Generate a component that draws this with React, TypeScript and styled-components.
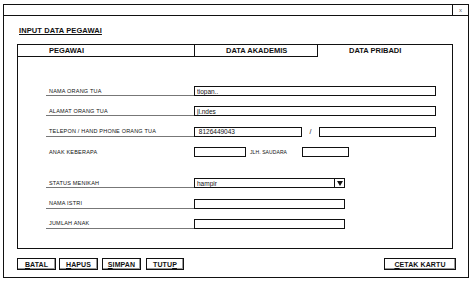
import styled, { createGlobalStyle } from "styled-components";

const GlobalStyle = createGlobalStyle`
  * {
    box-sizing: border-box;
  }
  body {
    margin: 0;
    background: #fff;
    font-family: "Liberation Sans", Arial, sans-serif;
    color: #111;
  }
`;

const Window = styled.div`
  margin: 4px 0 0 3px;
  width: 466px;
  height: 274px;
  border: 1px solid #111;
  display: flex;
  flex-direction: column;
`;

const TitleBar = styled.div`
  height: 11px;
  border-bottom: 1px solid #111;
  display: flex;
  justify-content: flex-end;
`;

const CloseBox = styled.div`
  width: 16px;
  border-left: 1px solid #111;
  font-size: 6px;
  color: #666;
  display: flex;
  align-items: center;
  justify-content: center;
`;

const Body = styled.div`
  padding-left: 13px;
  display: flex;
  flex-direction: column;
`;

const Heading = styled.div`
  margin-top: 10px;
  margin-left: 2px;
  height: 10px;
  font-size: 7.5px;
  font-weight: 700;
  letter-spacing: 0.1px;
  text-decoration: underline;
  text-underline-offset: 1px;
`;

const Panel = styled.div`
  margin-top: 8px;
  width: 436px;
  height: 205px;
  border: 1px solid #111;
  display: flex;
  flex-direction: column;
`;

const TabRow = styled.div`
  display: flex;
  height: 12px;
`;

const Tab = styled.div<{ $w?: number; $active?: boolean }>`
  ${(p) => (p.$w ? `width: ${p.$w}px;` : "flex: 1;")}
  border-bottom: 1px solid ${(p) => (p.$active ? "transparent" : "#111")};
  border-right: ${(p) => (p.$active ? "none" : "1px solid #111")};
  padding-left: 31px;
  font-size: 7.5px;
  font-weight: 700;
  display: flex;
  align-items: center;
`;

const Form = styled.div`
  padding: 29px 0 0 28px;
  display: flex;
  flex-direction: column;
`;

const Group = styled.div<{ $gap?: number }>`
  display: flex;
  flex-direction: column;
  gap: 10.4px;
  margin-top: ${(p) => p.$gap ?? 0}px;
`;

const Row = styled.div`
  display: flex;
  align-items: center;
  height: 10px;
`;

const Label = styled.div<{ $line?: boolean }>`
  width: 148px;
  height: 10px;
  padding-left: 3px;
  border-bottom: 1px solid ${(p) => (p.$line ? "#777" : "transparent")};
  font-size: 5.5px;
  letter-spacing: 0.2px;
  display: flex;
  align-items: center;
  white-space: nowrap;
`;

const Field = styled.input<{ $w: number }>`
  width: ${(p) => p.$w}px;
  height: 10px;
  border: 1px solid #111;
  padding: 0 2px;
  margin: 0;
  font-family: "Liberation Sans", Arial, sans-serif;
  font-size: 6.5px;
  color: #111;
  background: #fff;
  outline: none;
`;

const Slash = styled.div`
  width: 17px;
  text-align: center;
  font-size: 7px;
`;

const SmallLabel = styled.div`
  width: 56px;
  padding-left: 4px;
  font-size: 5px;
  letter-spacing: 0.1px;
  white-space: nowrap;
`;

const Select = styled.div`
  width: 151px;
  height: 10px;
  border: 1px solid #111;
  display: flex;
  align-items: center;
  font-size: 6.5px;
`;

const SelectText = styled.div`
  flex: 1;
  padding-left: 2px;
`;

const Arrow = styled.div`
  width: 10px;
  height: 100%;
  border-left: 1px solid #111;
  display: flex;
  align-items: center;
  justify-content: center;
`;

const ButtonRow = styled.div`
  margin-top: 9px;
  width: 439px;
  display: flex;
  align-items: center;
`;

const Button = styled.div<{ $w: number; $ml?: number }>`
  width: ${(p) => p.$w}px;
  height: 12px;
  margin-left: ${(p) => p.$ml ?? 0}px;
  border: 1px solid #111;
  box-shadow: inset -1px -1px 0 #999, inset 1px 1px 0 #fff;
  font-size: 7px;
  font-weight: 700;
  letter-spacing: 0.1px;
  display: flex;
  align-items: center;
  justify-content: center;
  u {
    text-underline-offset: 1px;
  }
`;

function Combo({ value }: { value: string }) {
  return (
    <Select>
      <SelectText>{value}</SelectText>
      <Arrow>
        <svg width="6" height="5" viewBox="0 0 6 5">
          <path d="M0 0H6L3 5Z" fill="#111" />
        </svg>
      </Arrow>
    </Select>
  );
}

export default function App() {
  return (
    <>
      <GlobalStyle />
      <Window>
        <TitleBar>
          <CloseBox>x</CloseBox>
        </TitleBar>
        <Body>
          <Heading>INPUT DATA PEGAWAI</Heading>
          <Panel>
            <TabRow>
              <Tab $w={177}>PEGAWAI</Tab>
              <Tab $w={123}>DATA AKADEMIS</Tab>
              <Tab $active>DATA PRIBADI</Tab>
            </TabRow>
            <Form>
              <Group>
                <Row>
                  <Label $line>NAMA ORANG TUA</Label>
                  <Field $w={242} readOnly defaultValue="tiopan.." />
                </Row>
                <Row>
                  <Label $line>ALAMAT ORANG TUA</Label>
                  <Field $w={242} readOnly defaultValue="jl.ndes" />
                </Row>
                <Row>
                  <Label $line>TELEPON / HAND PHONE ORANG TUA</Label>
                  <Field $w={108} readOnly defaultValue=" 8126449043" />
                  <Slash>/</Slash>
                  <Field $w={117} readOnly defaultValue="" />
                </Row>
                <Row>
                  <Label>ANAK KEBERAPA</Label>
                  <Field $w={52} readOnly defaultValue="" />
                  <SmallLabel>JLH. SAUDARA</SmallLabel>
                  <Field $w={47} readOnly defaultValue="" />
                </Row>
              </Group>
              <Group $gap={21}>
                <Row>
                  <Label $line>STATUS MENIKAH</Label>
                  <Combo value="hampir" />
                </Row>
                <Row>
                  <Label $line>NAMA ISTRI</Label>
                  <Field $w={151} readOnly defaultValue="" />
                </Row>
                <Row>
                  <Label $line>JUMLAH ANAK</Label>
                  <Field $w={151} readOnly defaultValue="" />
                </Row>
              </Group>
            </Form>
          </Panel>
          <ButtonRow>
            <Button $w={39}>
              <u>B</u>ATAL
            </Button>
            <Button $w={39} $ml={3}>
              <u>H</u>APUS
            </Button>
            <Button $w={39} $ml={4}>
              <u>S</u>IMPAN
            </Button>
            <Button $w={38} $ml={5}>
              TUTU<u>P</u>
            </Button>
            <Button $w={72} $ml={200}>
              <u>C</u>ETAK KARTU
            </Button>
          </ButtonRow>
        </Body>
      </Window>
    </>
  );
}
